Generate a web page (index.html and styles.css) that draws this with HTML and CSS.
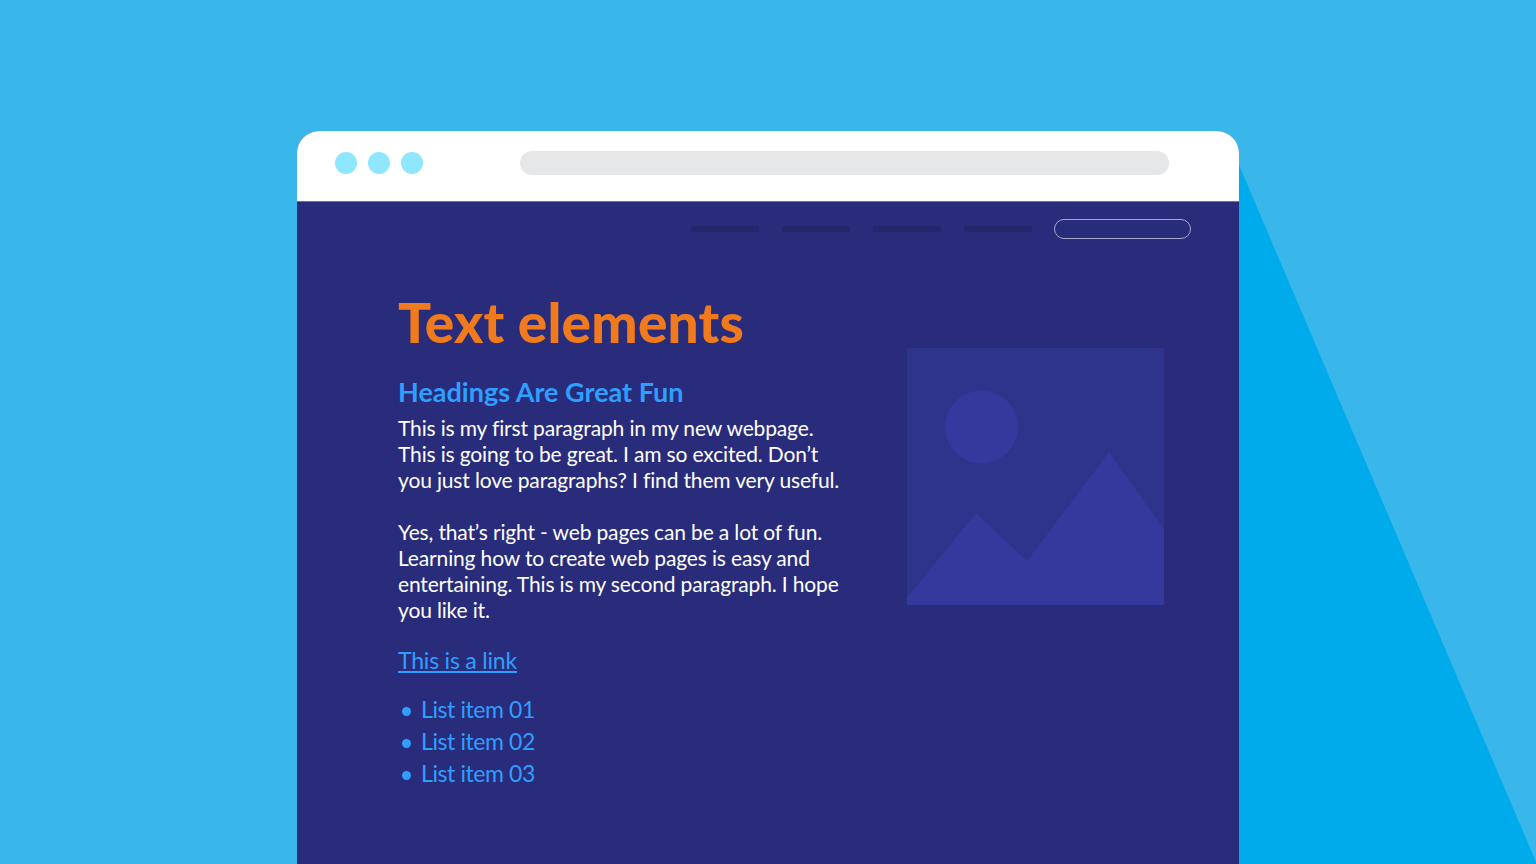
FILE: index.html
```html
<!DOCTYPE html>
<html lang="en">
<head>
    <meta charset="UTF-8">
    <title>Text elements</title>
    <link rel="stylesheet" href="styles.css">
</head>
<body>

    <!-- Background shadow -->
    <svg class="shadow" width="1536" height="864" viewBox="0 0 1536 864">
        <polygon points="1239,165 1536,862 1536,864 1239,864" fill="#00abeb"/>
    </svg>

    <div class="window">
        <!-- Browser bar -->
        <div class="bar">
            <div class="dots">
                <span class="dot"></span>
                <span class="dot"></span>
                <span class="dot"></span>
            </div>
            <div class="address"></div>
        </div>

        <div class="page">
            <!-- Nav -->
            <div class="nav">
                <div class="nav-items">
                    <span class="nav-item"></span>
                    <span class="nav-item"></span>
                    <span class="nav-item"></span>
                    <span class="nav-item"></span>
                </div>
                <span class="nav-button"></span>
            </div>

            <div class="content">
                <div class="text">
                    <h1>Text elements</h1>
                    <h2>Headings Are Great Fun</h2>
                    <p>This is my first paragraph in my new webpage.<br>This is going to be great. I am so excited. Don’t<br>you just love paragraphs? I find them very useful.</p>
                    <p>Yes, that’s right - web pages can be a lot of fun.<br>Learning how to create web pages is easy and<br>entertaining. This is my second paragraph. I hope<br>you like it.</p>
                    <a class="link" href="#">This is a link</a>
                    <ul>
                        <li>List item 01</li>
                        <li>List item 02</li>
                        <li>List item 03</li>
                    </ul>
                </div>

                <!-- Image placeholder -->
                <svg class="picture" width="257" height="257" viewBox="0 0 257 257">
                    <rect width="257" height="257" fill="#2e348c"/>
                    <circle cx="74.500" cy="79" r="36.500" fill="#35389c"/>
                    <polygon points="0,250 69,165 120,213 202,104 257,181 257,257 0,257" fill="#35389c"/>
                </svg>
            </div>
        </div>
    </div>

</body>
</html>
```

FILE: styles.css
```css
/* General Styles */
html, body {
    height: 100%;
}

body {
    margin: 0;
    background: #39b6ea;
    overflow: hidden;
    font-family: Lato, Arial, sans-serif;
    color: white;
}

.shadow {
    position: absolute;
    top: 0;
    left: 0;
}

/* Browser window */
.window {
    position: relative;
    width: 942px;
    height: 733px;
    margin: 131px 0 0 297px;
    border-radius: 22px 22px 0 0;
    overflow: hidden;
    background: #292c7b;
}

.bar {
    display: flex;
    align-items: center;
    height: 71px;
    padding: 0 70px 7px 38px;
    box-sizing: border-box;
    background: white;
    border-bottom: 1px solid #6f71a6;
}

.dots {
    display: flex;
    gap: 11px;
    margin-right: 97px;
}

.dot {
    width: 22px;
    height: 22px;
    border-radius: 50%;
    background: #8ee6ff;
}

.address {
    flex-grow: 1;
    height: 24px;
    border-radius: 12px;
    background: #e6e7e8;
}

/* Nav */
.page {
    padding: 17px 48px 0 101px;
}

.nav {
    display: flex;
    align-items: center;
    justify-content: flex-end;
    gap: 22px;
}

.nav-items {
    display: flex;
    gap: 23px;
}

.nav-item {
    width: 68px;
    height: 6px;
    background: #25276c;
}

.nav-button {
    width: 135px;
    height: 18px;
    border: 1px solid #a5a7cc;
    border-radius: 10px;
}

/* Content */
.content {
    display: flex;
    justify-content: space-between;
    padding-right: 27px;
}

h1 {
    margin: 48px 0 0;
    font-size: 55px;
    line-height: 70px;
    font-weight: 900;
    letter-spacing: 0.2px;
    color: #f07a1c;
}

h2 {
    margin: 18px 0 6px;
    font-size: 27px;
    line-height: 34px;
    font-weight: 700;
    color: #2f9fff;
}

p {
    margin: 0 0 26px;
    font-size: 21px;
    line-height: 26px;
    letter-spacing: -0.15px;
}

.link {
    display: block;
    width: fit-content;
    margin-top: -4px;
    font-size: 23px;
    line-height: 30px;
    letter-spacing: -0.2px;
    color: #2f9fff;
}

ul {
    list-style: none;
    margin: 18px 0 0;
    padding: 0;
}

li {
    position: relative;
    padding-left: 23px;
    font-size: 23px;
    line-height: 32px;
    letter-spacing: -0.4px;
    color: #2f9fff;
}

li::before {
    content: "";
    position: absolute;
    left: 4px;
    top: 14px;
    width: 9px;
    height: 9px;
    border-radius: 50%;
    background: #2f9fff;
}

.picture {
    margin-top: 109px;
}
```
